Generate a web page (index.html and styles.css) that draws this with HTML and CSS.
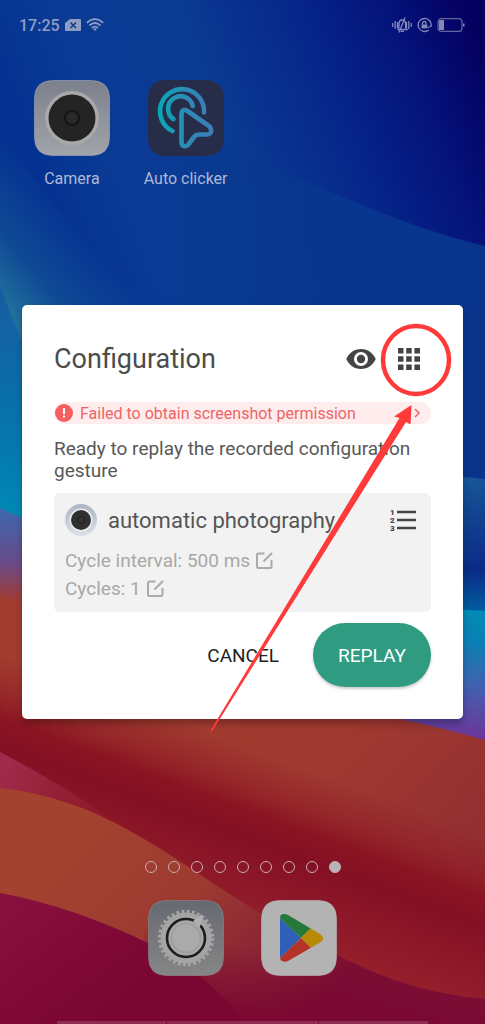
FILE: index.html
```
<!DOCTYPE html>
<html lang="en">
<head>
  <meta charset="utf-8">
  <meta name="viewport" content="width=device-width, initial-scale=1">
  <title>Configuration</title>
  <link rel="stylesheet" href="styles.css">
</head>
<body>
  <svg class="wallpaper" viewBox="0 0 485 1024" preserveAspectRatio="none" aria-hidden="true">
    <defs>
      <linearGradient id="sky" gradientUnits="userSpaceOnUse" x1="0" y1="250" x2="485" y2="60">
        <stop offset="0" stop-color="#04308f"/>
        <stop offset=".12" stop-color="#053292"/>
        <stop offset=".25" stop-color="#0a3a94"/>
        <stop offset=".5" stop-color="#0a3a92"/>
        <stop offset=".7" stop-color="#06268a"/>
        <stop offset=".87" stop-color="#04127a"/>
        <stop offset="1" stop-color="#040060"/>
      </linearGradient>
      <linearGradient id="fold" gradientUnits="userSpaceOnUse" x1="180" y1="0" x2="485" y2="0">
        <stop offset="0" stop-color="#08368f" stop-opacity="0"/>
        <stop offset=".5" stop-color="#08368f"/>
        <stop offset="1" stop-color="#08348c"/>
      </linearGradient>
      <linearGradient id="glow" gradientUnits="userSpaceOnUse" x1="0" y1="300" x2="84" y2="230">
        <stop offset="0" stop-color="#20709c"/>
        <stop offset=".4" stop-color="#20709c" stop-opacity=".4"/>
        <stop offset="1" stop-color="#20709c" stop-opacity="0"/>
      </linearGradient>
      <linearGradient id="teal" x1="0" y1="0" x2="0" y2="1">
        <stop offset="0" stop-color="#1a5ca0"/>
        <stop offset=".5" stop-color="#0870aa"/>
        <stop offset="1" stop-color="#008cb6"/>
      </linearGradient>
      <linearGradient id="dusk" gradientUnits="userSpaceOnUse" x1="0" y1="508" x2="0" y2="600">
        <stop offset="0" stop-color="#3d68b0"/>
        <stop offset=".6" stop-color="#684b88"/>
        <stop offset="1" stop-color="#a03c34"/>
      </linearGradient>
      <linearGradient id="navy" gradientUnits="userSpaceOnUse" x1="0" y1="474" x2="0" y2="612">
        <stop offset="0" stop-color="#185898"/>
        <stop offset=".35" stop-color="#10408f"/>
        <stop offset=".7" stop-color="#0a2c88"/>
        <stop offset="1" stop-color="#0060a0"/>
      </linearGradient>
      <linearGradient id="cyan" gradientUnits="userSpaceOnUse" x1="0" y1="610" x2="0" y2="735">
        <stop offset="0" stop-color="#008cb6"/>
        <stop offset=".25" stop-color="#0a80b4"/>
        <stop offset=".6" stop-color="#4062b0"/>
        <stop offset="1" stop-color="#6a389c"/>
      </linearGradient>
      <linearGradient id="rust" gradientUnits="userSpaceOnUse" x1="200" y1="600" x2="485" y2="860">
        <stop offset="0" stop-color="#a23c2e"/>
        <stop offset=".5" stop-color="#a03a30"/>
        <stop offset="1" stop-color="#922e32"/>
      </linearGradient>
      <linearGradient id="crimson" gradientUnits="userSpaceOnUse" x1="0" y1="655" x2="-60" y2="817">
        <stop offset="0" stop-color="#901c26" stop-opacity="0"/>
        <stop offset=".2" stop-color="#901c26" stop-opacity=".6"/>
        <stop offset=".35" stop-color="#8a1422"/>
        <stop offset=".5" stop-color="#841024"/>
        <stop offset="1" stop-color="#96202c"/>
      </linearGradient>
      <linearGradient id="rose" gradientUnits="userSpaceOnUse" x1="0" y1="770" x2="130" y2="850">
        <stop offset="0" stop-color="#9f2c4c"/>
        <stop offset="1" stop-color="#962230" stop-opacity="0"/>
      </linearGradient>
      <linearGradient id="amber" gradientUnits="userSpaceOnUse" x1="100" y1="800" x2="310" y2="1010">
        <stop offset="0" stop-color="#a44230"/>
        <stop offset=".45" stop-color="#9c3a30"/>
        <stop offset=".75" stop-color="#8a2434"/>
        <stop offset="1" stop-color="#7b0c33"/>
      </linearGradient>
      <linearGradient id="plum" gradientUnits="userSpaceOnUse" x1="20" y1="890" x2="110" y2="1010">
        <stop offset="0" stop-color="#88103e"/>
        <stop offset="1" stop-color="#7a0632"/>
      </linearGradient>
      <linearGradient id="shade" gradientUnits="userSpaceOnUse" x1="200" y1="935" x2="180" y2="1015">
        <stop offset="0" stop-color="#7a0632" stop-opacity="0"/>
        <stop offset="1" stop-color="#7a0632"/>
      </linearGradient>
    </defs>
    <rect width="485" height="1024" fill="url(#sky)"/>
    <path fill="url(#fold)" d="M180 124C300 180 400 226 485 246V480H180Z"/>
    <path fill="url(#glow)" d="M0 130C40 190 90 250 150 310V420H0Z"/>
    <path fill="url(#teal)" d="M0 284C10 315 22 345 50 400V530L0 509Z"/>
    <path fill="url(#dusk)" d="M0 508L60 534V640H0Z"/>
    <path fill="url(#navy)" d="M400 470L485 479V620H400Z"/>
    <path fill="url(#cyan)" d="M400 606L485 611V750H380Z"/>
    <path fill="url(#rust)" d="M0 594C15 612 40 615 70 620L300 700C370 712 430 724 485 740V1024H0Z"/>
    <path fill="url(#crimson)" d="M0 650L485 830V1024H0Z"/>
    <path fill="url(#rose)" d="M0 752C60 784 100 808 150 850L110 870L0 810Z"/>
    <path fill="url(#amber)" d="M0 788C45 793 90 808 130 831C180 858 230 898 285 927C340 956 390 990 485 999V1024H0Z"/>
    <path fill="url(#shade)" d="M148 921L300 960L485 1005V1024H120Z"/>
    <path fill="url(#plum)" d="M0 893C50 902 100 920 148 943L205 980L250 1024H0Z"/>
  </svg>

  <div class="phone">
    <header class="status-bar">
      <div class="status-group">
        <span class="clock">17:25</span>
        <svg width="16" height="13" viewBox="0 0 16 13" aria-hidden="true">
          <path fill="#8f9dc2" d="M5 0H15Q16 0 16 1V11Q16 12 15 12H1Q0 12 0 11V4Z"/>
          <path stroke="#123c92" stroke-width="1.6" d="M5.500 3.500L11 9M11 3.500L5.500 9"/>
        </svg>
        <svg width="18" height="14" viewBox="0 0 18 14" fill="none" stroke="#8f9dc2" stroke-width="1.7" aria-hidden="true">
          <path d="M.8 4.800Q9-2.600 17.200 4.800M3.400 7.500Q9 2.500 14.600 7.500M6 10Q9 7.300 12 10"/>
          <path fill="#8f9dc2" stroke="none" d="M7.200 11Q9 9.600 10.800 11L9 13Z"/>
        </svg>
      </div>
      <div class="status-group">
        <svg width="20" height="16" viewBox="0 0 20 16" fill="none" stroke="#8588b8" stroke-width="1.300" aria-hidden="true">
          <path d="M.7 6V10M3.200 4V12M5.500 5V11M14.500 5V11M16.800 4V12M19.300 6V10M6 12.500H15L13.500 10V6.500Q13.500 3 10 3Q7 3 7 7V10ZM7 15.500L13 .5M8.800 14.300H12"/>
        </svg>
        <svg width="15" height="16" viewBox="0 0 15 16" fill="none" stroke="#8588b8" stroke-width="1.300" aria-hidden="true">
          <path d="M11.800 13A6.500 6.500 0 1 1 14 9.500M10.500 10.500L14 9.500"/>
          <path d="M5.500 7.500V6Q5.500 4.500 7.300 4.500Q9 4.500 9 6V7.500"/>
          <rect x="4.500" y="7.500" width="5.800" height="3.800" fill="#8588b8" stroke="none"/>
        </svg>
        <svg width="28" height="14" viewBox="0 0 28 14" aria-hidden="true">
          <rect x="1" y=".7" width="24" height="12.600" rx="3" fill="none" stroke="#64669f" stroke-width="1.200"/>
          <path fill="#8588b0" d="M2 3Q2 2 3 2H7V12H3Q2 12 2 11ZM26 5.500H27.500V8.500H26Z"/>
        </svg>
      </div>
    </header>

    <main class="apps">
      <a class="app" href="#camera">
        <svg class="app-icon" viewBox="0 0 76 76" aria-hidden="true">
          <defs>
            <linearGradient id="cam" x1="0" y1="0" x2="0" y2="1">
              <stop offset="0" stop-color="#7b808c"/>
              <stop offset="1" stop-color="#a2a4ab"/>
            </linearGradient>
          </defs>
          <path fill="url(#cam)" stroke="#a9abb2" stroke-width=".6" d="M19 .5H57Q75.500.5 75.500 19V57Q75.500 75.500 57 75.500H19Q.5 75.500.5 57V19Q.5.5 19 .5Z"/>
          <circle cx="38" cy="38" r="27" fill="#aaa9a9"/>
          <circle cx="38" cy="38" r="23.500" fill="#242424"/>
          <circle cx="38" cy="38" r="7" fill="#292929" stroke="#151515" stroke-width="2"/>
        </svg>
        <span>Camera</span>
      </a>
      <a class="app" href="#auto-clicker">
        <svg class="app-icon" viewBox="0 0 76 76" aria-hidden="true">
          <defs>
            <linearGradient id="click" gradientUnits="userSpaceOnUse" x1="11" y1="0" x2="62" y2="0">
              <stop offset="0" stop-color="#08a8b4"/>
              <stop offset=".5" stop-color="#2a8cb8"/>
              <stop offset="1" stop-color="#3b7db8"/>
            </linearGradient>
          </defs>
          <path fill="#272c49" d="M19 0H57Q76 0 76 19V57Q76 76 57 76H19Q0 76 0 57V19Q0 0 19 0Z"/>
          <g fill="none" stroke="url(#click)" stroke-width="4.600" stroke-linecap="round" stroke-linejoin="round">
            <path d="M24.500 51A22 22 0 1 1 56 32.500M25.500 39A12.500 12.500 0 1 1 44.800 26"/>
            <path d="M33.500 34Q34 28 39.500 31L61 46Q64 49 63 52Q62 54.500 58 54.500H51Q48 54.500 46 57L40 65Q34 68.500 33.500 62Z"/>
          </g>
        </svg>
        <span>Auto clicker</span>
      </a>
    </main>

    <footer class="home">
      <div class="pages">
        <i></i><i></i><i></i><i></i><i></i><i></i><i></i><i></i><i class="current"></i>
      </div>
      <nav class="dock">
        <a href="#settings" aria-label="Settings">
          <svg class="app-icon" viewBox="0 0 76 76" aria-hidden="true">
            <defs>
              <linearGradient id="set" x1="0" y1="0" x2="0" y2="1">
                <stop offset="0" stop-color="#666971"/>
                <stop offset="1" stop-color="#868686"/>
              </linearGradient>
            </defs>
            <path fill="url(#set)" stroke="#8a8a90" stroke-width=".6" d="M19 .5H57Q75.500.5 75.500 19V57Q75.500 75.500 57 75.500H19Q.5 75.500.5 57V19Q.5.5 19 .5Z"/>
            <circle cx="38" cy="38" r="25.500" fill="#a4a4a4"/>
            <circle cx="38" cy="38" r="26.500" fill="none" stroke="#a4a4a4" stroke-width="3.500" stroke-dasharray="2.700 2.504"/>
            <circle cx="38" cy="38" r="19" fill="#a8a8a8" stroke="#1c1c1c" stroke-width="2.600"/>
            <path fill="#b0b0b0" d="M45 21L54 14V22L51 28Z"/>
            <circle cx="38" cy="38" r="14.500" fill="#ababab" stroke="#a0a0a0" stroke-width="2"/>
          </svg>
        </a>
        <a href="#play" aria-label="Play Store">
          <svg class="app-icon" viewBox="0 0 76 76" aria-hidden="true">
            <defs>
              <clipPath id="play">
                <path d="M19 18Q19 14 23 14Q25 14 27 15L59 34Q62 36 62 38Q62 41 59 42.500L27 61Q24 62.500 21 61Q19 60 19 57Z"/>
              </clipPath>
            </defs>
            <path fill="#b3b3b3" stroke="#bbb6b8" stroke-width=".6" d="M19 .5H57Q75.500.5 75.500 19V57Q75.500 75.500 57 75.500H19Q.5 75.500.5 57V19Q.5.5 19 .5Z"/>
            <g clip-path="url(#play)">
              <path fill="#2f5fb6" d="M18 17L40 38L18 59Z"/>
              <path fill="#24783a" d="M18 17V10L60 18L40 38Z"/>
              <path fill="#b88a06" d="M40 38L54 24H65V52H54Z"/>
              <path fill="#b43428" d="M18 59L40 38L55 53L30 68H18Z"/>
            </g>
          </svg>
        </a>
      </nav>
      <div class="nav-strip"><i></i><i></i><i></i></div>
    </footer>
  </div>

  <div class="overlay">
    <section class="dialog" role="dialog" aria-labelledby="dialog-title">
      <div class="dialog-head">
        <h1 id="dialog-title">Configuration</h1>
        <button class="icon-button" type="button" aria-label="Preview">
          <svg width="30" height="22" viewBox="0 0 30 22" aria-hidden="true">
            <path fill="#444" fill-rule="evenodd" d="M15 1C8 1 3 5 .3 11C3 17 8 21 15 21S27 17 29.700 11C27 5 22 1 15 1ZM15 18A7 7 0 1 1 15 4A7 7 0 1 1 15 18Z"/>
            <circle cx="15" cy="11" r="4.200" fill="#444"/>
          </svg>
        </button>
        <button class="icon-button" type="button" aria-label="All configurations">
          <svg width="22" height="22" viewBox="0 0 22 22" aria-hidden="true">
            <path fill="#444" d="M0 0H5.500V5.500H0ZM8.200 0H13.700V5.500H8.200ZM16.400 0H22V5.500H16.400ZM0 8.200H5.500V13.700H0ZM8.200 8.200H13.700V13.700H8.200ZM16.400 8.200H22V13.700H16.400ZM0 16.400H5.500V22H0ZM8.200 16.400H13.700V22H8.200ZM16.400 16.400H22V22H16.400Z"/>
          </svg>
        </button>
      </div>

      <a class="alert" href="#permission">
        <svg width="20" height="20" viewBox="0 0 20 20" aria-hidden="true">
          <circle cx="10" cy="10" r="9" fill="#f55f60"/>
          <path stroke="#fff" stroke-width="2" d="M10 5V11M10 12.500V14.500"/>
        </svg>
        <span>Failed to obtain screenshot permission</span>
        <svg width="8" height="10" viewBox="0 0 8 10" fill="none" stroke="#ee6467" stroke-width="1.500" aria-hidden="true">
          <path d="M2 1L6 5L2 9"/>
        </svg>
      </a>

      <p class="message">Ready to replay the recorded configuration gesture</p>

      <div class="task">
        <div class="task-head">
          <svg width="32" height="32" viewBox="0 0 32 32" aria-hidden="true">
            <defs>
              <linearGradient id="lens" x1="0" y1="0" x2="0" y2="1">
                <stop offset="0" stop-color="#adb4c2"/>
                <stop offset="1" stop-color="#dce0e8"/>
              </linearGradient>
            </defs>
            <circle cx="16" cy="16" r="16" fill="url(#lens)"/>
            <circle cx="16" cy="16" r="11.500" fill="#eceef1"/>
            <circle cx="16" cy="16" r="10" fill="#303030"/>
            <circle cx="16" cy="16" r="3.200" fill="#363636" stroke="#1c1c1c"/>
          </svg>
          <h2>automatic photography</h2>
          <button class="icon-button" type="button" aria-label="Steps">
            <svg width="27" height="24" viewBox="0 0 27 24" aria-hidden="true">
              <path stroke="#444" stroke-width="2.400" d="M8 4H27M8 12H27M8 20H27"/>
              <g class="list-digits">
                <text x="1" y="7">1</text>
                <text x="1" y="15">2</text>
                <text x="1" y="23">3</text>
              </g>
            </svg>
          </button>
        </div>
        <button class="setting" type="button">
          Cycle interval: 500 ms
          <svg width="17" height="17" viewBox="0 0 17 17" fill="none" stroke="#aaa" stroke-width="2" aria-hidden="true">
            <path d="M8.500 1.500H2.500Q1 1.500 1 3V14.500Q1 16 2.500 16H14Q15.500 16 15.500 14.500V8M7.500 9.500L16 1"/>
          </svg>
        </button>
        <button class="setting" type="button">
          Cycles: 1
          <svg width="17" height="17" viewBox="0 0 17 17" fill="none" stroke="#aaa" stroke-width="2" aria-hidden="true">
            <path d="M8.500 1.500H2.500Q1 1.500 1 3V14.500Q1 16 2.500 16H14Q15.500 16 15.500 14.500V8M7.500 9.500L16 1"/>
          </svg>
        </button>
      </div>

      <div class="actions">
        <button class="cancel" type="button">CANCEL</button>
        <button class="replay" type="button">REPLAY</button>
      </div>

      <svg class="pointer" width="242" height="410" viewBox="0 0 242 410" aria-hidden="true">
        <ellipse cx="206" cy="37" rx="33" ry="34" fill="none" stroke="#ff3a3a" stroke-width="4.500"/>
        <path fill="#ff3a3a" d="M201.500 82L184 93.500L189.500 95L.5 407.500L2 408.500L196 99L200.500 101.500Z"/>
      </svg>
    </section>
  </div>
</body>
</html>
```
FILE: styles.css
```
* {
  box-sizing: border-box;
}

body {
  margin: 0;
  font-family: Roboto, "Liberation Sans", sans-serif;
  background-color: #063490;
}

h1, h2, p {
  margin: 0;
  font-weight: normal;
}

a {
  color: inherit;
  text-decoration: none;
}

button {
  padding: 0;
  border: none;
  background: none;
  font-family: inherit;
  cursor: pointer;
}

svg {
  display: block;
  flex: none;
}

.wallpaper {
  position: absolute;
  width: 100%;
  height: 100%;
}

/* home screen */
.phone {
  position: relative;
  min-height: 100vh;
  display: flex;
  flex-direction: column;
}

.status-bar {
  display: flex;
  justify-content: space-between;
  height: 50px;
  padding: 0 20px 0 19px;
}

.status-group {
  display: flex;
  align-items: center;
  gap: 5px;
}

.clock {
  color: #8f9dc2;
  font-size: 16px;
  font-weight: 500;
}

.apps {
  flex: 1;
  display: grid;
  grid-template-columns: repeat(4, 1fr);
  align-content: start;
  padding: 30px 15px 0;
}

.app {
  display: flex;
  flex-direction: column;
  align-items: center;
  gap: 13px;
  color: #adb9d5;
  font-size: 16px;
  line-height: 20px;
}

.app-icon {
  width: 76px;
  height: 76px;
}

.home {
  display: flex;
  flex-direction: column;
  align-items: center;
}

.pages {
  display: flex;
  gap: 11px;
  margin-bottom: 27px;
}

.pages i {
  width: 12px;
  height: 12px;
  border: 1px solid #c8aeb2;
  border-radius: 50%;
}

.pages .current {
  background-color: #b8b5b6;
}

.dock {
  display: flex;
  gap: 37px;
  margin-bottom: 45px;
}

.nav-strip {
  align-self: stretch;
  display: grid;
  grid-template-columns: 109fr 151fr 109fr;
  gap: 1px;
  height: 3px;
  margin: 0 57px;
}

.nav-strip i {
  background-color: rgba(255, 255, 255, 0.15);
}

/* dialog */
.overlay {
  position: absolute;
  top: 0;
  left: 0;
  width: 100%;
  height: 100%;
  display: flex;
  align-items: center;
  padding: 0 22px;
}

.dialog {
  position: relative;
  flex: 1;
  padding: 32px;
  border-radius: 5px;
  background-color: #fff;
  box-shadow: 0 5px 7px rgba(0, 0, 0, 0.25);
}

.dialog-head {
  display: flex;
  align-items: center;
  gap: 22px;
  height: 44px;
  margin-bottom: 21px;
  padding-right: 11px;
}

.dialog-head h1 {
  flex: 1;
  color: #4c4c4c;
  font-size: 27px;
}

.alert {
  display: flex;
  align-items: center;
  gap: 6px;
  height: 22px;
  padding-right: 10px;
  border-radius: 11px;
  background-color: #ffeded;
  color: #ee6467;
  font-size: 16px;
}

.alert span {
  flex: 1;
}

.message {
  margin: 14px 0 11px;
  color: #585858;
  font-size: 19px;
  line-height: 22px;
}

.task {
  padding: 11px 11px 10px;
  border-radius: 6px;
  background-color: #f2f2f2;
}

.task-head {
  display: flex;
  align-items: center;
  gap: 11px;
  height: 32px;
  margin-bottom: 10px;
  padding-right: 4px;
}

.task-head h2 {
  flex: 1;
  color: #555;
  font-size: 22px;
}

.list-digits {
  fill: #444;
  font-size: 8px;
  font-weight: 900;
}

.setting {
  display: flex;
  align-items: center;
  gap: 6px;
  height: 28px;
  color: #a8a8a8;
  font-size: 19px;
}

.actions {
  display: flex;
  justify-content: flex-end;
  gap: 34px;
  margin-top: 11px;
}

.actions button {
  height: 64px;
  font-size: 19px;
}

.cancel {
  color: #222;
}

.replay {
  width: 118px;
  border-radius: 32px;
  background-color: #2f9c82;
  color: #fff;
  box-shadow: 0 2px 3px rgba(0, 0, 0, 0.2);
}

/* red callout drawn over the dialog */
.pointer {
  position: absolute;
  top: 18px;
  right: 11px;
  pointer-events: none;
}
```
